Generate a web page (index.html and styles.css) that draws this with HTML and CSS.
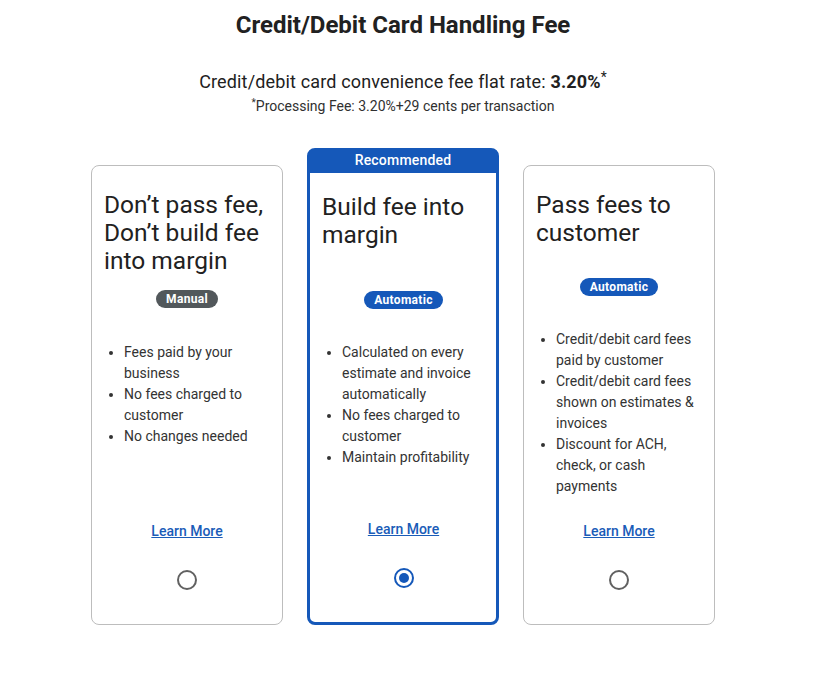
FILE: index.html
```html
<!DOCTYPE html>
<html lang="en">
<head>
<meta charset="utf-8">
<title>Credit/Debit Card Handling Fee</title>
<link rel="stylesheet" href="styles.css">
</head>
<body>
<div class="page">
  <h1 class="title">Credit/Debit Card Handling Fee</h1>
  <p class="rate">Credit/debit card convenience fee flat rate: <strong>3.20%</strong><sup>*</sup></p>
  <p class="note"><sup>*</sup>Processing Fee: 3.20%+29 cents per transaction</p>

  <div class="cards">
    <div class="card card-one">
      <h2 class="card-title">Don’t pass fee, Don’t build fee into margin</h2>
      <div class="badge-row"><span class="badge badge-gray">Manual</span></div>
      <ul class="points">
        <li>Fees paid by your business</li>
        <li>No fees charged to customer</li>
        <li>No changes needed</li>
      </ul>
      <div class="card-foot">
        <a class="learn" href="#">Learn More</a>
        <span class="radio"></span>
      </div>
    </div>

    <div class="card card-two selected">
      <div class="rec">Recommended</div>
      <h2 class="card-title">Build fee into margin</h2>
      <div class="badge-row"><span class="badge badge-blue">Automatic</span></div>
      <ul class="points">
        <li>Calculated on every estimate and invoice automatically</li>
        <li>No fees charged to customer</li>
        <li>Maintain profitability</li>
      </ul>
      <div class="card-foot">
        <a class="learn" href="#">Learn More</a>
        <span class="radio radio-on"></span>
      </div>
    </div>

    <div class="card card-three">
      <h2 class="card-title">Pass fees to customer</h2>
      <div class="badge-row"><span class="badge badge-blue">Automatic</span></div>
      <ul class="points">
        <li>Credit/debit card fees paid by customer</li>
        <li>Credit/debit card fees shown on estimates &amp; invoices</li>
        <li>Discount for ACH, check, or cash payments</li>
      </ul>
      <div class="card-foot">
        <a class="learn" href="#">Learn More</a>
        <span class="radio"></span>
      </div>
    </div>
  </div>
</div>
</body>
</html>
```

FILE: styles.css
```css
* { box-sizing: border-box; }

body {
  margin: 0;
  background: #ffffff;
  color: #212121;
  font-family: Roboto, "Liberation Sans", Arial, sans-serif;
}

.page {
  width: 806px;
  padding-top: 10px;
  display: flex;
  flex-direction: column;
  align-items: center;
}

.title {
  margin: 0;
  font-size: 24px;
  line-height: 30px;
  font-weight: 700;
  color: #212121;
}

.rate {
  margin: 30px 0 0;
  font-size: 18px;
  line-height: 24px;
  letter-spacing: 0.15px;
  color: #212121;
}

.rate strong { font-weight: 700; }

.rate sup {
  font-size: 14px;
  line-height: 0;
  vertical-align: 6px;
}

.note {
  margin: 2px 0 0;
  font-size: 14px;
  line-height: 20px;
  color: #303030;
}

.note sup {
  font-size: 10px;
  line-height: 0;
  vertical-align: 5px;
}

.cards {
  margin-top: 32px;
  display: flex;
  align-items: flex-end;
  gap: 24px;
}

.card {
  width: 192px;
  height: 460px;
  border: 1px solid #bdbdbd;
  border-radius: 8px;
  display: flex;
  flex-direction: column;
  padding: 0 12px;
}

.card.selected {
  height: 477px;
  border: 3px solid #1558b9;
  padding: 0 11px 0 12px;
}

.rec {
  margin: 0 -11px 0 -12px;
  height: 22px;
  background: #1558b9;
  color: #ffffff;
  font-size: 14px;
  font-weight: 500;
  line-height: 19px;
  text-align: center;
  letter-spacing: 0.2px;
}

.card-title {
  margin: 25px 0 0;
  font-size: 24.5px;
  line-height: 28px;
  font-weight: 400;
  color: #212121;
}

.card-one .card-title { margin-bottom: 15px; }
.card-two .card-title { margin: 20px 0 42px; }
.card-three .card-title { margin-bottom: 31px; }

.badge-row {
  display: flex;
  justify-content: center;
}

.badge {
  display: inline-block;
  height: 18px;
  padding: 0 10px;
  border-radius: 9px;
  color: #ffffff;
  font-size: 12px;
  font-weight: 700;
  line-height: 18px;
  letter-spacing: 0.3px;
}

.badge-gray { background: #52585b; }
.badge-blue { background: #1558b9; }

.points {
  margin: 34px 0 0;
  padding: 0 0 0 20px;
  font-size: 14px;
  line-height: 21px;
  color: #333333;
}

.card-two .points,
.card-three .points { margin-top: 33px; }

.card-foot {
  margin-top: auto;
  padding-bottom: 34px;
  display: flex;
  flex-direction: column;
  align-items: center;
}

.learn {
  color: #1a5cb8;
  font-size: 14px;
  font-weight: 500;
  line-height: 20px;
  text-decoration: underline;
}

.radio {
  margin-top: 29px;
  width: 20px;
  height: 20px;
  border-radius: 50%;
  border: 2px solid #616161;
  display: flex;
  align-items: center;
  justify-content: center;
}

.radio-on {
  border-color: #1558b9;
}

.radio-on::after {
  content: "";
  width: 10px;
  height: 10px;
  border-radius: 50%;
  background: #1558b9;
}
```
